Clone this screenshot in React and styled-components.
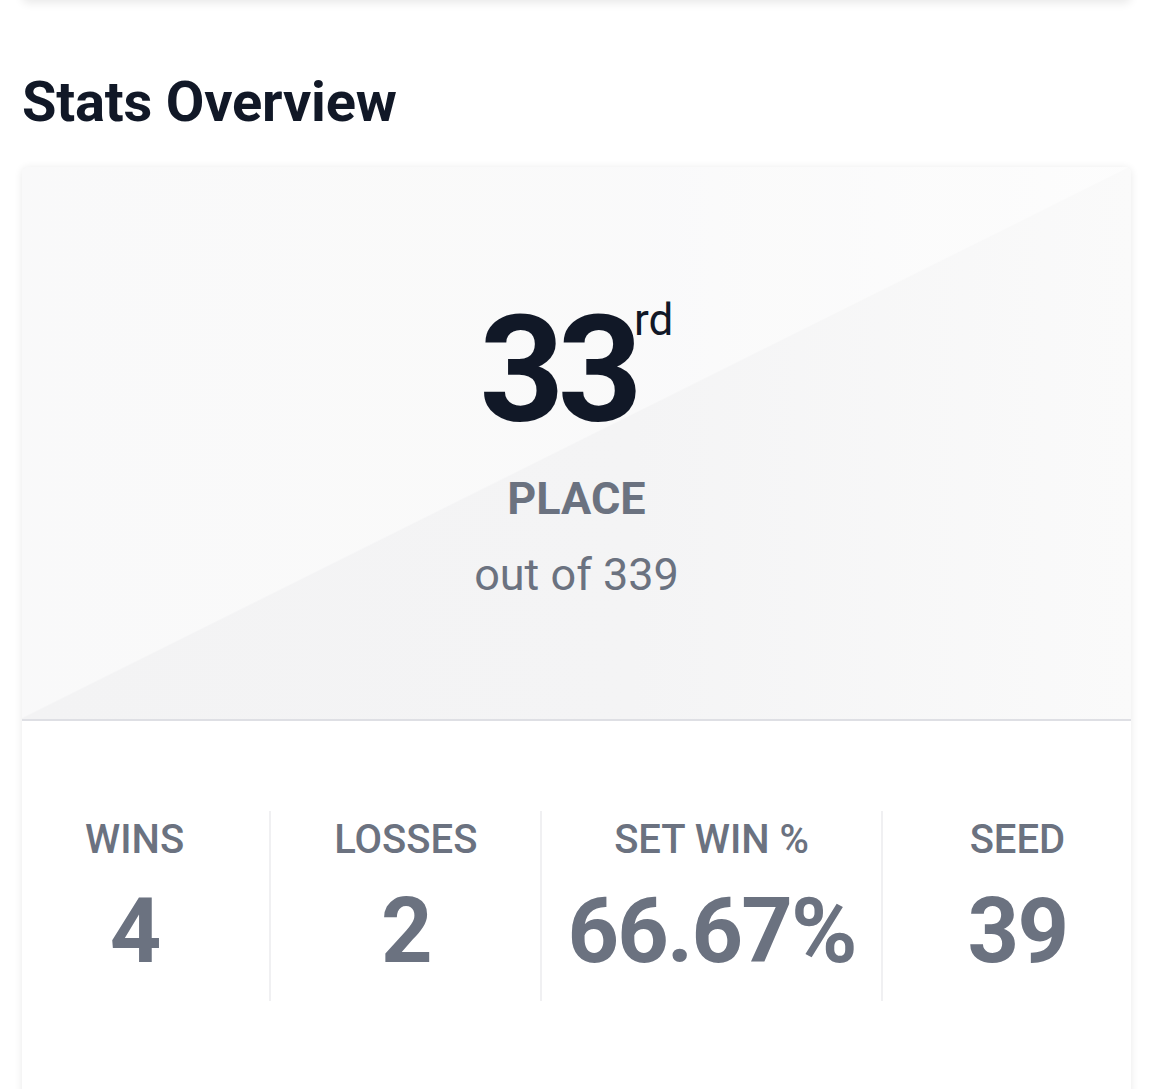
import styled, { createGlobalStyle } from "styled-components";

const GlobalStyle = createGlobalStyle`
  html, body {
    margin: 0;
    padding: 0;
    background: #ffffff;
    overflow: hidden;
  }
  body {
    font-family: Roboto, "Liberation Sans", Arial, sans-serif;
    -webkit-font-smoothing: antialiased;
  }
`;

const Page = styled.div`
  padding: 0 21px 0 22px;
`;

// bottom of the card above, scrolled mostly out of view
const PrevCard = styled.div`
  height: 40px;
  margin-top: -40px;
  background: #ffffff;
  border-radius: 0 0 6px 6px;
  box-shadow: 0 3px 10px rgba(0, 0, 0, 0.09);
`;

const Heading = styled.h2`
  margin: 69px 0 31px;
  font-size: 56px;
  line-height: 1.2;
  font-weight: 700;
  letter-spacing: -0.2px;
  color: #111827;
`;

const Card = styled.section`
  background: #ffffff;
  border-radius: 6px 6px 0 0;
  box-shadow: 0 1px 8px rgba(0, 0, 0, 0.09);
`;

const Hero = styled.div`
  display: flex;
  flex-direction: column;
  align-items: center;
  padding: 130px 0 122px;
  border-bottom: 2px solid #dedfe4;
  border-radius: 6px 6px 0 0;
  background:
    linear-gradient(to bottom right, rgba(255, 255, 255, 0.5) 49.85%, rgba(255, 255, 255, 0) 50%),
    linear-gradient(to right, #f3f3f4 0%, #f4f4f5 55%, #fafafa 100%);
`;

const Rank = styled.div`
  font-size: 148px;
  line-height: 1;
  font-weight: 700;
  letter-spacing: -0.045em;
  color: #111827;
  white-space: nowrap;
`;

const Suffix = styled.sup`
  font-size: 44px;
  line-height: 1;
  font-weight: 400;
  letter-spacing: 0;
  vertical-align: 86px;
  margin-left: -2px;
`;

const PlaceLabel = styled.div`
  margin-top: 31px;
  font-size: 45px;
  line-height: 1;
  font-weight: 700;
  color: #6b7280;
`;

const OutOf = styled.div`
  margin-top: 31px;
  font-size: 45px;
  line-height: 1;
  font-weight: 400;
  color: #6b7280;
`;

// the row runs a little past the card on both sides
const StatsRow = styled.div`
  display: flex;
  margin: 0 -21px 0 -22px;
  padding: 90px 0 140px;
`;

const Stat = styled.div`
  flex: 1 1 0;
  display: flex;
  flex-direction: column;
  align-items: center;
  padding: 9px 25px 24px;
  border-left: ${(p) => (p.$first ? "none" : "2px solid #f0f0f2")};
  white-space: nowrap;
`;

const StatLabel = styled.div`
  font-size: 40px;
  line-height: 1;
  font-weight: 500;
  color: #6b7280;
`;

const StatValue = styled.div`
  margin-top: 27px;
  font-size: 90px;
  line-height: 1;
  font-weight: 700;
  letter-spacing: -0.02em;
  color: #6b7280;
`;

const stats = [
  { label: "WINS", value: "4" },
  { label: "LOSSES", value: "2" },
  { label: "SET WIN %", value: "66.67%" },
  { label: "SEED", value: "39" },
];

export default function App() {
  return (
    <>
      <GlobalStyle />
      <Page>
        <PrevCard />
        <Heading>Stats Overview</Heading>
        <Card>
          <Hero>
            <Rank>
              33<Suffix>rd</Suffix>
            </Rank>
            <PlaceLabel>PLACE</PlaceLabel>
            <OutOf>out of 339</OutOf>
          </Hero>
          <StatsRow>
            {stats.map((s, i) => (
              <Stat key={s.label} $first={i === 0}>
                <StatLabel>{s.label}</StatLabel>
                <StatValue>{s.value}</StatValue>
              </Stat>
            ))}
          </StatsRow>
        </Card>
      </Page>
    </>
  );
}
